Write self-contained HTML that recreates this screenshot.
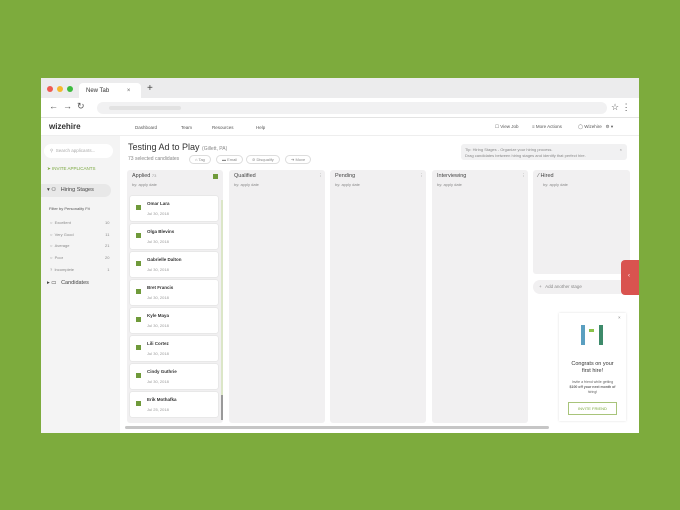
<!DOCTYPE html><html><head><style>
*{margin:0;padding:0;box-sizing:border-box}
body{width:680px;height:510px;background:#7dab3d;font-family:"Liberation Sans",sans-serif;position:relative;overflow:hidden;color:#444}
.a{position:absolute}
.win{left:41px;top:78px;width:598px;height:355px;background:#fff;overflow:hidden}
.t{font-size:4.5px;color:#888}
.col{background:#f1f0f1;border-radius:3px}
.card{position:absolute;left:3px;width:88px;height:25px;background:#fff;border-radius:2px;box-shadow:0 0 1px #bbb}
.card b{position:absolute;left:17px;top:5px;font-size:4.5px;font-weight:bold;color:#333}
.card i{position:absolute;left:17px;top:15px;font-size:4px;color:#999;font-style:normal}
.card s{position:absolute;left:6px;top:9px;width:5px;height:5px;background:#6f9a3a;text-decoration:none}
.ch{font-size:5.5px;color:#444}
</style></head><body>
<div class="a win">
<div class="a" style="left:0;top:0;width:598px;height:20px;background:#ececed"></div>
<div class="a" style="left:6px;top:8px;width:6px;height:6px;border-radius:3px;background:#ee5a52"></div>
<div class="a" style="left:16px;top:8px;width:6px;height:6px;border-radius:3px;background:#f5b82e"></div>
<div class="a" style="left:26px;top:8px;width:6px;height:6px;border-radius:3px;background:#3dbb3f"></div>
<div class="a" style="left:38px;top:5px;width:62px;height:15px;background:#fff;border-radius:4px 4px 0 0;font-size:6px;padding:5px 0 0 7px;color:#333">New Tab <span style="margin-left:16px;color:#666">×</span></div>
<div class="a" style="left:106px;top:5px;font-size:10px;color:#444">+</div>
<div class="a" style="left:0;top:20px;width:598px;height:20px;background:#fff;border-bottom:1px solid #e3e3e3"></div>
<div class="a" style="left:8px;top:23px;font-size:9px;color:#555">← &nbsp;→ &nbsp;↻</div>
<div class="a" style="left:56px;top:24px;width:510px;height:12px;background:#f1f1f2;border-radius:6px"></div>
<div class="a" style="left:68px;top:28px;width:72px;height:4px;background:#e2e2e2;border-radius:2px"></div>
<div class="a" style="left:570px;top:24px;font-size:9px;color:#555">☆ ⋮</div>
<div class="a" style="left:0;top:40px;width:598px;height:18px;border-bottom:1px solid #eee"></div>
<div class="a" style="left:8px;top:44px;font-size:8px;font-weight:bold;color:#333">wizehire</div>
<div class="a t" style="left:94px;top:47px;color:#555">Dashboard</div>
<div class="a t" style="left:140px;top:47px;color:#555">Team</div>
<div class="a t" style="left:171px;top:47px;color:#555">Resources</div>
<div class="a t" style="left:215px;top:47px;color:#555">Help</div>
<div class="a t" style="left:454px;top:46px;color:#555">☐ View Job</div>
<div class="a t" style="left:491px;top:46px;color:#555">≡ More Actions</div>
<div class="a t" style="left:537px;top:46px;color:#555">◯ Wizehire &nbsp; ⚙ ▾</div>
<div class="a" style="left:0;top:58px;width:79px;height:297px;background:#f4f4f4"></div>
<div class="a" style="left:3px;top:66px;width:69px;height:14px;background:#fff;border-radius:7px;font-size:4.5px;color:#aaa;padding:4px 0 0 6px">⚲ &nbsp;Search applicants...</div>
<div class="a t" style="left:6px;top:88px;color:#7aa83f">➤ INVITE APPLICANTS</div>
<div class="a" style="left:0;top:106px;width:70px;height:13px;background:#e8e8e8;border-radius:0 7px 7px 0;font-size:5.5px;padding:3px 0 0 6px;color:#444">▾ ⚇ &nbsp; Hiring Stages</div>
<div class="a t" style="left:8px;top:128px;font-size:4px;color:#555">Filter by Personality Fit</div>
<div class="a t" style="left:9px;top:139px;font-size:4px;line-height:11.7px">○ &nbsp;Excellent<br>○ &nbsp;Very Good<br>○ &nbsp;Average<br>○ &nbsp;Poor<br>? &nbsp;Incomplete</div>
<div class="a t" style="left:64px;top:139px;font-size:4px;line-height:11.7px;text-align:right">10<br>11<br>21<br>20<br>1</div>
<div class="a" style="left:6px;top:202px;font-size:5.5px;color:#444">▸ ▭ &nbsp; Candidates</div>
<div class="a" style="left:87px;top:64px;font-size:9px;color:#333">Testing Ad to Play <span style="font-size:5px;color:#888">(Gillett, PA)</span></div>
<div class="a t" style="left:87px;top:78px;font-size:5px">73 selected candidates</div>
<div class="a t" style="left:148px;top:77px;border:1px solid #ddd;border-radius:5px;padding:1px 5px;font-size:4px">⌂ Tag</div>
<div class="a t" style="left:175px;top:77px;border:1px solid #ddd;border-radius:5px;padding:1px 5px;font-size:4px">▬ Email</div>
<div class="a t" style="left:205px;top:77px;border:1px solid #ddd;border-radius:5px;padding:1px 5px;font-size:4px">⊘ Disqualify</div>
<div class="a t" style="left:244px;top:77px;border:1px solid #ddd;border-radius:5px;padding:1px 5px;font-size:4px">➔ Move</div>
<div class="a" style="left:420px;top:66px;width:166px;height:16px;background:#f1f1f2;border-radius:3px;font-size:4px;color:#888;padding:3px 0 0 4px;line-height:6px">Tip: Hiring Stages - Organize your hiring process. <span style="float:right;margin-right:5px">×</span><br>Drag candidates between hiring stages and identify that perfect hire.</div>
<div class="a col" style="left:86px;top:92px;width:96px;height:253px">
<div class="a ch" style="left:5px;top:3px">Applied <span style="font-size:4px;color:#999">73</span></div>
<div class="a" style="left:86px;top:4px;width:5px;height:5px;background:#6f9a3a"></div>
<div class="a t" style="left:5px;top:12px;font-size:4px">by: apply date</div>
<div class="a" style="left:94px;top:30px;width:2px;height:220px;background:#dbe6c7"></div>
<div class="a" style="left:94px;top:225px;width:2px;height:25px;background:#999"></div>
<div class="card" style="top:26px"><s></s><b>Omar Lara</b><i>Jul 30, 2018</i></div>
<div class="card" style="top:54px"><s></s><b>Olga Blevins</b><i>Jul 30, 2018</i></div>
<div class="card" style="top:82px"><s></s><b>Gabrielle Dalton</b><i>Jul 30, 2018</i></div>
<div class="card" style="top:110px"><s></s><b>Bret Francis</b><i>Jul 30, 2018</i></div>
<div class="card" style="top:138px"><s></s><b>Kyle Maya</b><i>Jul 30, 2018</i></div>
<div class="card" style="top:166px"><s></s><b>Lili Cortez</b><i>Jul 30, 2018</i></div>
<div class="card" style="top:194px"><s></s><b>Cindy Guthrie</b><i>Jul 30, 2018</i></div>
<div class="card" style="top:222px"><s></s><b>Erik Mothafka</b><i>Jul 25, 2018</i></div>
</div>
<div class="a col" style="left:188px;top:92px;width:96px;height:253px"><div class="a ch" style="left:5px;top:3px">Qualified</div><div class="a t" style="left:5px;top:12px;font-size:4px">by: apply date</div><div class="a t" style="left:89px;top:3px">⋮</div></div>
<div class="a col" style="left:289px;top:92px;width:96px;height:253px"><div class="a ch" style="left:5px;top:3px">Pending</div><div class="a t" style="left:5px;top:12px;font-size:4px">by: apply date</div><div class="a t" style="left:89px;top:3px">⋮</div></div>
<div class="a col" style="left:391px;top:92px;width:96px;height:253px"><div class="a ch" style="left:5px;top:3px">Interviewing</div><div class="a t" style="left:5px;top:12px;font-size:4px">by: apply date</div><div class="a t" style="left:89px;top:3px">⋮</div></div>
<div class="a col" style="left:492px;top:92px;width:97px;height:104px"><div class="a ch" style="left:5px;top:3px">⁄ Hired</div><div class="a t" style="left:10px;top:12px;font-size:4px">by: apply date</div></div>
<div class="a" style="left:492px;top:202px;width:97px;height:14px;background:#f1f0f1;border-radius:7px;font-size:4.5px;color:#888;padding:4px 0 0 6px">+ &nbsp; Add another stage</div>
<div class="a" style="left:580px;top:182px;width:18px;height:35px;background:#d9534f;border-radius:4px 0 0 4px;color:#fff;font-size:6px;padding:13px 0 0 7px">‹</div>
<div class="a" style="left:518px;top:235px;width:67px;height:108px;background:#fff;box-shadow:0 0 2px #ddd">
<div class="a t" style="left:59px;top:2px">×</div>
<div class="a" style="left:22px;top:12px;width:4px;height:20px;background:#5a9fc0"></div>
<div class="a" style="left:40px;top:12px;width:4px;height:20px;background:#3d8a6a"></div>
<div class="a" style="left:30px;top:16px;width:5px;height:3px;background:#8bc34a"></div>
<div class="a" style="left:0;top:48px;width:67px;text-align:center;font-size:5.5px;color:#333;line-height:7px">Congrats on your<br>first hire!</div>
<div class="a" style="left:0;top:67px;width:67px;text-align:center;font-size:3.5px;color:#666;line-height:5px">Invite a friend while getting<br><b>$100 off your next month of</b><br>hiring!</div>
<div class="a" style="left:9px;top:89px;width:49px;height:13px;border:1px solid #a8c47a;font-size:4px;color:#7aa83f;text-align:center;padding-top:3px">INVITE FRIEND</div>
</div>
<div class="a" style="left:84px;top:348px;width:424px;height:3px;background:#c6c6c6;border-radius:2px"></div>
</div>
</body></html>
